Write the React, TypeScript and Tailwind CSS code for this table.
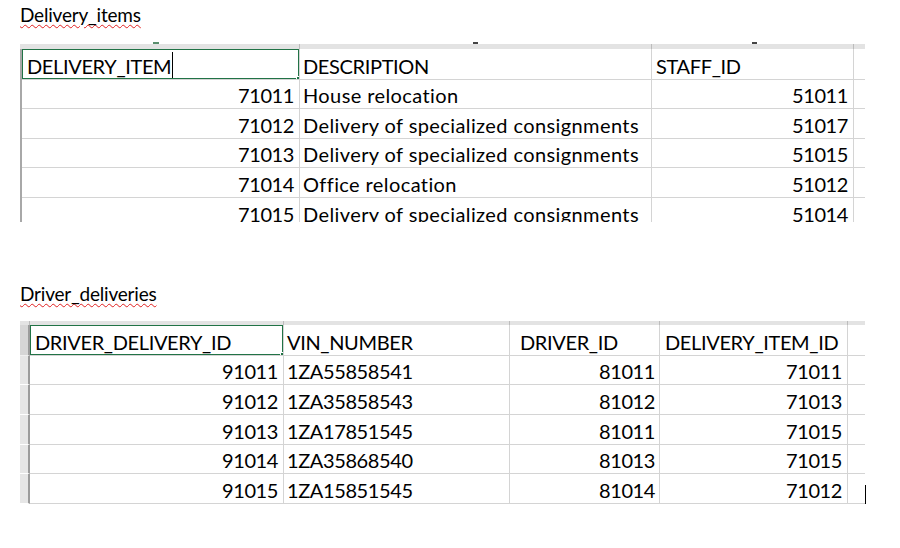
import React from 'react'

const deliveryItems = [
  ['71011', 'House relocation', '51011'],
  ['71012', 'Delivery of specialized consignments', '51017'],
  ['71013', 'Delivery of specialized consignments', '51015'],
  ['71014', 'Office relocation', '51012'],
  ['71015', 'Delivery of specialized consignments', '51014'],
]

const driverDeliveries = [
  ['91011', '1ZA55858541', '81011', '71011'],
  ['91012', '1ZA35858543', '81012', '71013'],
  ['91013', '1ZA17851545', '81011', '71015'],
  ['91014', '1ZA35868540', '81013', '71015'],
  ['91015', '1ZA15851545', '81014', '71012'],
]

const rowH1 = ['h-[29px]', 'h-[30px]', 'h-[29px]', 'h-[30px]', 'h-[30px]']
const rowH2 = ['h-[29px]', 'h-[30px]', 'h-[30px]', 'h-[29px]', 'h-[30px]']

const cell =
  'flex items-end pb-[3px] leading-[20px] border-b border-r border-[#d4d4d4] whitespace-nowrap overflow-hidden'
const caps = 'tracking-[-0.35px]'
const nums = 'tracking-[-0.4px]'
const words = 'tracking-[0.4px]'

function Title({ children }: { children: React.ReactNode }) {
  return (
    <div className="pl-[20px] text-[19px] leading-[24px] tracking-[-0.2px]">
      <span className="underline decoration-wavy decoration-[#e02020] decoration-1 underline-offset-[2px]">
        {children}
      </span>
    </div>
  )
}

function Selection() {
  return (
    <div className="pointer-events-none absolute -left-[1px] -top-[1px] -right-[1px] -bottom-[1px] border-2 border-[#217346]">
      <div className="absolute -bottom-[4px] -right-[4px] h-[6px] w-[6px] border border-white bg-[#217346]" />
    </div>
  )
}

export default function App() {
  return (
    <div className="relative h-[548px] w-[900px] overflow-hidden bg-white font-['Lato',sans-serif] text-[20px] text-black">
      <div className="pt-[3px]">
        <Title>Delivery_items</Title>
      </div>

      {/* Delivery_items table, cropped at the last row like the screenshot */}
      <div className="ml-[20px] mt-[17px] w-[845px]">
        <div className="grid h-[5px] grid-cols-[280px_352px_202px_11px] bg-[#e3e3e3]">
          <div className="relative border-r border-[#bcbcbc]">
            <div className="absolute left-[133px] -top-[2px] h-[2px] w-[6px] bg-[#5a8f6e]" />
          </div>
          <div className="relative border-r border-[#bcbcbc]">
            <div className="absolute left-[173px] -top-[2px] h-[2px] w-[5px] bg-[#444]" />
          </div>
          <div className="relative border-r border-[#bcbcbc]">
            <div className="absolute left-[100px] -top-[2px] h-[2px] w-[5px] bg-[#444]" />
          </div>
          <div />
        </div>
        <div className="grid h-[173px] grid-cols-[2px_278px_352px_202px_11px] overflow-hidden">
          <div className="row-span-6 bg-[#a8a8a8]" />
          <div className={`${cell} ${caps} relative h-[31px] pl-[5px]`}>
            DELIVERY_ITEM
            <div className="absolute left-[150px] top-[3px] h-[27px] w-[1px] bg-black" />
            <Selection />
          </div>
          <div className={`${cell} ${caps} h-[31px] pl-[3px]`}>DESCRIPTION</div>
          <div className={`${cell} ${caps} h-[31px] pl-[4px]`}>STAFF_ID</div>
          <div className="h-[31px] border-b border-[#d4d4d4]" />
          {deliveryItems.map((r, i) => (
            <React.Fragment key={r[0]}>
              <div className={`${cell} ${nums} ${rowH1[i]} justify-end pr-[5px]`}>{r[0]}</div>
              <div className={`${cell} ${words} ${rowH1[i]} pl-[3px]`}>{r[1]}</div>
              <div className={`${cell} ${nums} ${rowH1[i]} justify-end pr-[5px]`}>{r[2]}</div>
              <div className={`${rowH1[i]} border-b border-[#d4d4d4]`} />
            </React.Fragment>
          ))}
        </div>
      </div>

      <div className="mt-[60px]">
        <Title>Driver_deliveries</Title>
      </div>

      {/* Driver_deliveries table */}
      <div className="ml-[20px] mt-[15px] w-[845px]">
        <div className="grid h-[4px] grid-cols-[10px_254px_226px_150px_188px_17px] bg-[#e3e3e3]">
          <div className="border-r border-[#bcbcbc]" />
          <div className="border-r border-[#bcbcbc]" />
          <div className="border-r border-[#bcbcbc]" />
          <div className="border-r border-[#bcbcbc]" />
          <div className="border-r border-[#bcbcbc]" />
          <div />
        </div>
        <div className="grid grid-cols-[10px_254px_226px_150px_188px_17px]">
          <div className="h-[31px] border-b border-r-2 border-b-[#f0f0f0] border-r-[#9c9c9c] bg-[#d6d6d6]" />
          <div className={`${cell} ${caps} relative h-[31px] pl-[5px]`}>
            DRIVER_DELIVERY_ID
            <Selection />
          </div>
          <div className={`${cell} ${caps} h-[31px] pl-[3px]`}>VIN_NUMBER</div>
          <div className={`${cell} ${caps} h-[31px] pl-[10px]`}>DRIVER_ID</div>
          <div className={`${cell} ${caps} h-[31px] pl-[5px]`}>DELIVERY_ITEM_ID</div>
          <div className="h-[31px] border-b border-[#d4d4d4]" />
          {driverDeliveries.map((r, i) => (
            <React.Fragment key={r[0]}>
              <div className={`${rowH2[i]} border-b border-r-2 border-b-[#ffffff] border-r-[#9c9c9c] bg-[#e6e6e6]`} />
              <div className={`${cell} ${nums} ${rowH2[i]} justify-end pr-[5px]`}>{r[0]}</div>
              <div className={`${cell} ${nums} ${rowH2[i]} pl-[3px]`}>{r[1]}</div>
              <div className={`${cell} ${nums} ${rowH2[i]} justify-end pr-[4px]`}>{r[2]}</div>
              <div className={`${cell} ${nums} ${rowH2[i]} justify-end pr-[5px]`}>{r[3]}</div>
              <div className={`${rowH2[i]} relative border-b border-[#d4d4d4]`}>
                {i === 4 && <div className="absolute left-[17px] top-[11px] h-[19px] w-[1px] bg-black" />}
              </div>
            </React.Fragment>
          ))}
        </div>
      </div>
    </div>
  )
}
